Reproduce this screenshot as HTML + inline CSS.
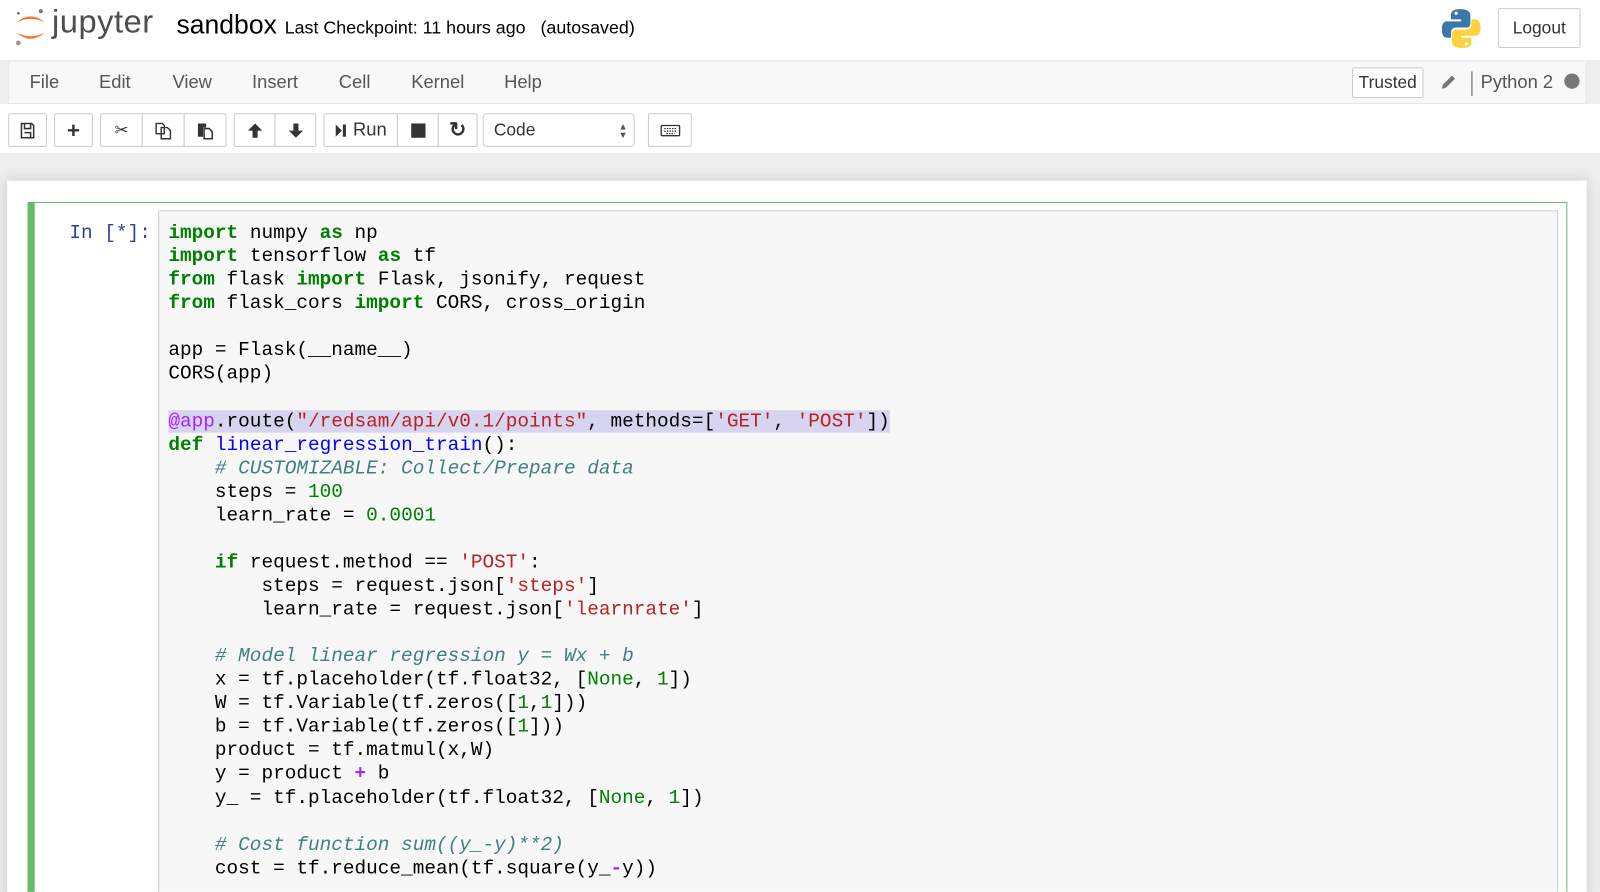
<!DOCTYPE html>
<html><head><meta charset="utf-8"><style>
*{box-sizing:border-box;margin:0;padding:0}
html,body{width:1600px;height:891px;overflow:hidden;background:#eee}
#w{position:absolute;left:0;top:0;width:1568px;height:874px;transform:scale(1.0204);transform-origin:0 0;font-family:"Liberation Sans",Arial,sans-serif;color:#000;background:#eee;overflow:hidden}
.abs{position:absolute}
#hdr{left:0;top:0;width:1568px;height:60px;background:#fff;border-bottom:1px solid #e7e7e7}
#menu{left:8px;top:61px;width:1547px;height:41px;background:#f8f8f8;border:1px solid #e7e7e7;border-top:none}
#tbar{left:0;top:102px;width:1568px;height:48px;background:#fff}
.mi{position:absolute;top:9px;font-size:18px;color:#555}
.btn{position:absolute;top:111px;height:33px;background:#fff;border:1px solid #ccc;border-radius:2px;display:flex;align-items:center;justify-content:center;color:#333;font-size:18px}
#nb{left:7px;top:177px;width:1548px;height:720px;background:#fff;box-shadow:0 0 12px 1px rgba(87,87,87,.2)}
#cell{left:27px;top:198px;width:1509px;height:700px;border:1px solid #66bb6a;border-left:7px solid #66bb6a}
#inp{left:155px;top:206px;width:1372px;height:700px;background:#f7f7f7;border:1px solid #cfcfcf;border-radius:2px}
pre{position:absolute;left:165px;top:217px;font-family:"Liberation Mono","DejaVu Sans Mono",monospace;font-size:19px;line-height:23.07px;color:#000}
.k{color:#008000;font-weight:bold}.s{color:#ba2121}.n{color:#008000}.c{color:#408080;font-style:italic}.f{color:#0000ff}.d{color:#aa22ff}.o{color:#aa22ff;font-weight:bold}
.hl{background:#d7d4f0}
</style></head><body><div id="w">
<div id="hdr" class="abs"></div>
<svg class="abs" style="left:12px;top:6px" width="36" height="40" viewBox="0 0 36 40">
<path d="M4 16 Q18 4 32 16 Q18 9 4 16Z" fill="#f37726"/>
<path d="M4 26 Q18 38 32 26 Q18 33 4 26Z" fill="#f37726"/>
<circle cx="28" cy="5" r="2" fill="#767677"/><circle cx="6" cy="36" r="2.3" fill="#989798"/><circle cx="6" cy="7" r="1.3" fill="#616262"/>
</svg>
<div class="abs" style="left:51px;top:3px;font-size:32px;color:#4e4e4e;letter-spacing:.5px">jupyter</div>
<div class="abs" style="left:173px;top:9px;font-size:26px;color:#000">sandbox</div>
<div class="abs" style="left:279px;top:17px;font-size:17.5px;color:#000">Last Checkpoint: 11 hours ago &nbsp;&nbsp;(autosaved)</div>
<svg class="abs" style="left:1413px;top:8px" width="38" height="40" viewBox="0 0 38 40">
<path d="M18 1 C9 1 9 5 9 7 V11 H19 V13 H5 C1 13 0 17 0 21 C0 26 2 29 5 29 H9 V24 C9 21 11 19 14 19 H24 C27 19 28 17 28 15 V7 C28 3 24 1 18 1Z" fill="#3b77a8"/>
<path d="M20 39 C29 39 29 35 29 33 V29 H19 V27 H33 C37 27 38 23 38 19 C38 14 36 11 33 11 H29 V16 C29 19 27 21 24 21 H14 C11 21 10 23 10 25 V33 C10 37 14 39 20 39Z" fill="#fdd23d"/>
<circle cx="14" cy="5" r="1.6" fill="#fff"/><circle cx="24" cy="35" r="1.6" fill="#fff"/>
</svg>
<div class="abs" style="left:1468px;top:8px;width:81px;height:39px;border:1px solid #ccc;border-radius:2px;font-size:17px;display:flex;align-items:center;justify-content:center;color:#333">Logout</div>

<div id="menu" class="abs">
<span class="mi" style="left:20px">File</span><span class="mi" style="left:88px">Edit</span><span class="mi" style="left:160px">View</span><span class="mi" style="left:238px">Insert</span><span class="mi" style="left:323px">Cell</span><span class="mi" style="left:394px">Kernel</span><span class="mi" style="left:485px">Help</span>
<div class="abs" style="left:1316px;top:5px;width:70px;height:30px;background:#fff;border:1px solid #ccc;border-radius:2px;font-size:17px;display:flex;align-items:center;justify-content:center;color:#333">Trusted</div>
<svg class="abs" style="left:1401px;top:11px" width="18" height="18" viewBox="0 0 18 18"><path d="M3 15 L4 11 L13 2 L16 5 L7 14Z" fill="#777"/></svg>
<div class="abs" style="left:1433px;top:9px;width:1px;height:24px;background:#555"></div>
<span class="mi" style="left:1442px">Python 2</span>
<div class="abs" style="left:1524px;top:11px;width:15px;height:15px;border-radius:50%;background:#777"></div>
</div>

<div id="tbar" class="abs"></div>
<div class="btn" style="left:8px;width:38px"><svg width="14" height="16" viewBox="0 0 14 16"><path d="M1 1H11L13 3V15H1Z M4 1V6H10V1 M4 10H10V15" fill="none" stroke="#333" stroke-width="1.5"/></svg></div>
<div class="btn" style="left:53px;width:38px;font-weight:bold;font-size:22px">+</div>
<div class="btn" style="left:98px;width:42px;border-radius:2px 0 0 2px;font-size:16px">✂</div>
<div class="btn" style="left:139px;width:42px;border-radius:0"><svg width="18" height="18" viewBox="0 0 18 18"><path d="M2 2H8L10 4V12H2Z M7 6H13L16 9V17H7Z" fill="#fff" stroke="#333" stroke-width="1.4"/></svg></div>
<div class="btn" style="left:180px;width:42px;border-radius:0 2px 2px 0"><svg width="18" height="18" viewBox="0 0 18 18"><path d="M2 2H10V6H7V15H2Z" fill="#333"/><path d="M8 7H13L16 10V17H8Z" fill="#fff" stroke="#333" stroke-width="1.5"/></svg></div>
<div class="btn" style="left:229px;width:41px"><svg width="16" height="16" viewBox="0 0 16 16"><path d="M8 1L15 8H10.5V15H5.5V8H1Z" fill="#333"/></svg></div>
<div class="btn" style="left:269px;width:41px"><svg width="16" height="16" viewBox="0 0 16 16"><path d="M8 15L15 8H10.5V1H5.5V8H1Z" fill="#333"/></svg></div>
<div class="btn" style="left:317px;width:73px;font-size:18px"><svg width="12" height="14" viewBox="0 0 12 14" style="margin-right:6px"><path d="M1 1L7 7L1 13Z" fill="#333"/><rect x="8" y="1" width="3" height="12" fill="#333"/></svg>Run</div>
<div class="btn" style="left:389px;width:41px;border-radius:0"><div style="width:14px;height:14px;background:#333"></div></div>
<div class="btn" style="left:429px;width:39px;font-weight:bold;font-size:20px">↻</div>
<div class="btn" style="left:473px;width:149px;justify-content:flex-start;padding-left:10px;border-radius:4px;font-size:17px">Code<span style="position:absolute;right:6px;font-size:9px;line-height:8px;color:#555">▲<br>▼</span></div>
<div class="btn" style="left:635px;width:43px"><svg width="20" height="12" viewBox="0 0 20 12"><rect x="1" y="1" width="18" height="10" rx="1" fill="none" stroke="#333" stroke-width="1.3"/><path d="M4 4h12M4 6.5h12M6 9h8" stroke="#333" stroke-width="1.2" stroke-dasharray="1.5 1"/></svg></div>

<div id="nb" class="abs"></div>
<div id="cell" class="abs"></div>
<div class="abs" style="left:68px;top:217px;font-family:'Liberation Mono',monospace;font-size:19px;line-height:23px;color:#303f9f">In [*]:</div>
<div id="inp" class="abs"></div>
<pre><span class="k">import</span> numpy <span class="k">as</span> np
<span class="k">import</span> tensorflow <span class="k">as</span> tf
<span class="k">from</span> flask <span class="k">import</span> Flask, jsonify, request
<span class="k">from</span> flask_cors <span class="k">import</span> CORS, cross_origin

app = Flask(__name__)
CORS(app)

<span class="hl"><span class="d">@app</span>.route(<span class="s">"/redsam/api/v0.1/points"</span>, methods=[<span class="s">'GET'</span>, <span class="s">'POST'</span>])</span>
<span class="k">def</span> <span class="f">linear_regression_train</span>():
    <span class="c"># CUSTOMIZABLE: Collect/Prepare data</span>
    steps = <span class="n">100</span>
    learn_rate = <span class="n">0.0001</span>

    <span class="k">if</span> request.method == <span class="s">'POST'</span>:
        steps = request.json[<span class="s">'steps'</span>]
        learn_rate = request.json[<span class="s">'learnrate'</span>]

    <span class="c"># Model linear regression y = Wx + b</span>
    x = tf.placeholder(tf.float32, [<span class="n">None</span>, <span class="n">1</span>])
    W = tf.Variable(tf.zeros([<span class="n">1</span>,<span class="n">1</span>]))
    b = tf.Variable(tf.zeros([<span class="n">1</span>]))
    product = tf.matmul(x,W)
    y = product <span class="o">+</span> b
    y_ = tf.placeholder(tf.float32, [<span class="n">None</span>, <span class="n">1</span>])

    <span class="c"># Cost function sum((y_-y)**2)</span>
    cost = tf.reduce_mean(tf.square(y_<span class="o">-</span>y))
</pre>
</div></body></html>
